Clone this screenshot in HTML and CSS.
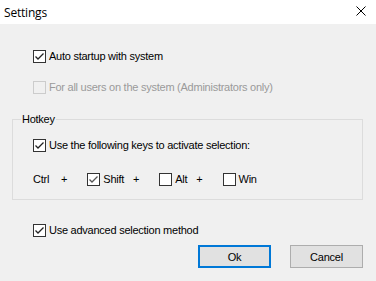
FILE: index.html
```html
<!DOCTYPE html>
<html>
<head>
<meta charset="utf-8">
<link rel="stylesheet" href="styles.css">
</head>
<body>
<div class="window">
  <div class="titlebar">
    <span class="title">Settings</span>
    <svg class="close" width="10" height="10" viewBox="0 0 10 10"><path d="M0.5 0.5 L9.5 9.5 M9.5 0.5 L0.5 9.5" stroke="#000" stroke-width="1" fill="none"/></svg>
  </div>
  <div class="content">
    <label class="row row-first">
      <span class="cb"><svg viewBox="0 0 11 11" width="11" height="11"><path d="M1.5 5.5 L4 8 L9.5 2.5" stroke="#222" stroke-width="1.3" fill="none"/></svg></span>
      <span class="lbl">Auto startup with system</span>
    </label>
    <label class="row row-second disabled">
      <span class="cb"></span>
      <span class="lbl">For all users on the system (Administrators only)</span>
    </label>

    <div class="group">
      <span class="group-title">Hotkey</span>
      <label class="row">
        <span class="cb"><svg viewBox="0 0 11 11" width="11" height="11"><path d="M1.5 5.5 L4 8 L9.5 2.5" stroke="#222" stroke-width="1.3" fill="none"/></svg></span>
        <span class="lbl">Use the following keys to activate selection:</span>
      </label>
      <div class="row keys">
        <span class="lbl">Ctrl</span>
        <span class="plus p1">+</span>
        <label class="key k-shift">
          <span class="cb"><svg viewBox="0 0 11 11" width="11" height="11"><path d="M1.5 5.5 L4 8 L9.5 2.5" stroke="#555" stroke-width="1.3" fill="none"/></svg></span>
          <span class="lbl">Shift</span>
        </label>
        <span class="plus p2">+</span>
        <label class="key k-alt">
          <span class="cb"></span>
          <span class="lbl">Alt</span>
        </label>
        <span class="plus p3">+</span>
        <label class="key k-win">
          <span class="cb"></span>
          <span class="lbl">Win</span>
        </label>
      </div>
    </div>

    <label class="row row-adv">
      <span class="cb"><svg viewBox="0 0 11 11" width="11" height="11"><path d="M1.5 5.5 L4 8 L9.5 2.5" stroke="#222" stroke-width="1.3" fill="none"/></svg></span>
      <span class="lbl">Use advanced selection method</span>
    </label>

    <div class="buttons">
      <button class="btn btn-default">Ok</button>
      <button class="btn">Cancel</button>
    </div>
  </div>
</div>
</body>
</html>
```

FILE: styles.css
```css
* { box-sizing: border-box; }
html, body {
  margin: 0;
  padding: 0;
}
body {
  width: 376px;
  height: 281px;
  overflow: hidden;
  font-family: "Liberation Sans", Arial, sans-serif;
  font-size: 11px;
  letter-spacing: -0.25px;
  color: #000;
}
.window {
  width: 376px;
  height: 281px;
  background: #f0f0f0;
  display: flex;
  flex-direction: column;
}
.titlebar {
  height: 24px;
  flex: none;
  background: #fff;
  display: flex;
  align-items: center;
  justify-content: space-between;
  padding: 0 10px 0 4px;
}
.title {
  font-family: "Open Sans", "Noto Sans", sans-serif;
  font-size: 12px;
  letter-spacing: -0.2px;
  line-height: 24px;
  margin-top: 1px;
}
.close {
  display: block;
  margin-top: -2px;
}
.content {
  display: flex;
  flex-direction: column;
  padding: 0 13px 0 12px;
}
.row {
  display: flex;
  align-items: center;
  height: 13px;
  line-height: 13px;
  padding-left: 21px;
}
.row-first { margin-top: 26px; }
.row-second { margin-top: 18px; }
.cb {
  width: 13px;
  height: 13px;
  flex: none;
  border: 1px solid #333;
  background: #fff;
  display: flex;
  align-items: center;
  justify-content: center;
}
.cb svg { display: block; }
.lbl {
  margin-left: 3px;
  white-space: nowrap;
}
.disabled .cb {
  border-color: #cccccc;
  background: #f0f0f0;
}
.disabled .lbl { color: #9a9a9a; }

.group {
  position: relative;
  margin-top: 25px;
  height: 81px;
  border: 1px solid #dcdcdc;
  padding: 19px 0 0 0;
}
.group .row { padding-left: 20px; }
.group-title {
  position: absolute;
  top: -7px;
  left: 8px;
  padding: 0 1px;
  background: #f0f0f0;
  line-height: 13px;
}
.keys { margin-top: 21px; }
.keys > .lbl:first-child { margin-left: 0; }
.key {
  display: flex;
  align-items: center;
}
.plus { white-space: nowrap; }
.p1 { margin-left: 12px; }
.k-shift { margin-left: 20px; }
.p2 { margin-left: 9px; }
.k-alt { margin-left: 20px; }
.p3 { margin-left: 9px; }
.k-win { margin-left: 20px; }

.row-adv { margin-top: 24px; }

.buttons {
  display: flex;
  justify-content: flex-end;
  gap: 19px;
  margin-top: 8px;
}
.btn {
  width: 73px;
  height: 23px;
  background: #e1e1e1;
  border: 1px solid #adadad;
  font-family: "Liberation Sans", Arial, sans-serif;
  font-size: 11px;
  letter-spacing: -0.2px;
  color: #000;
  padding: 0;
  margin: 0;
}
.btn-default {
  border: 2px solid #0078d7;
}
```
